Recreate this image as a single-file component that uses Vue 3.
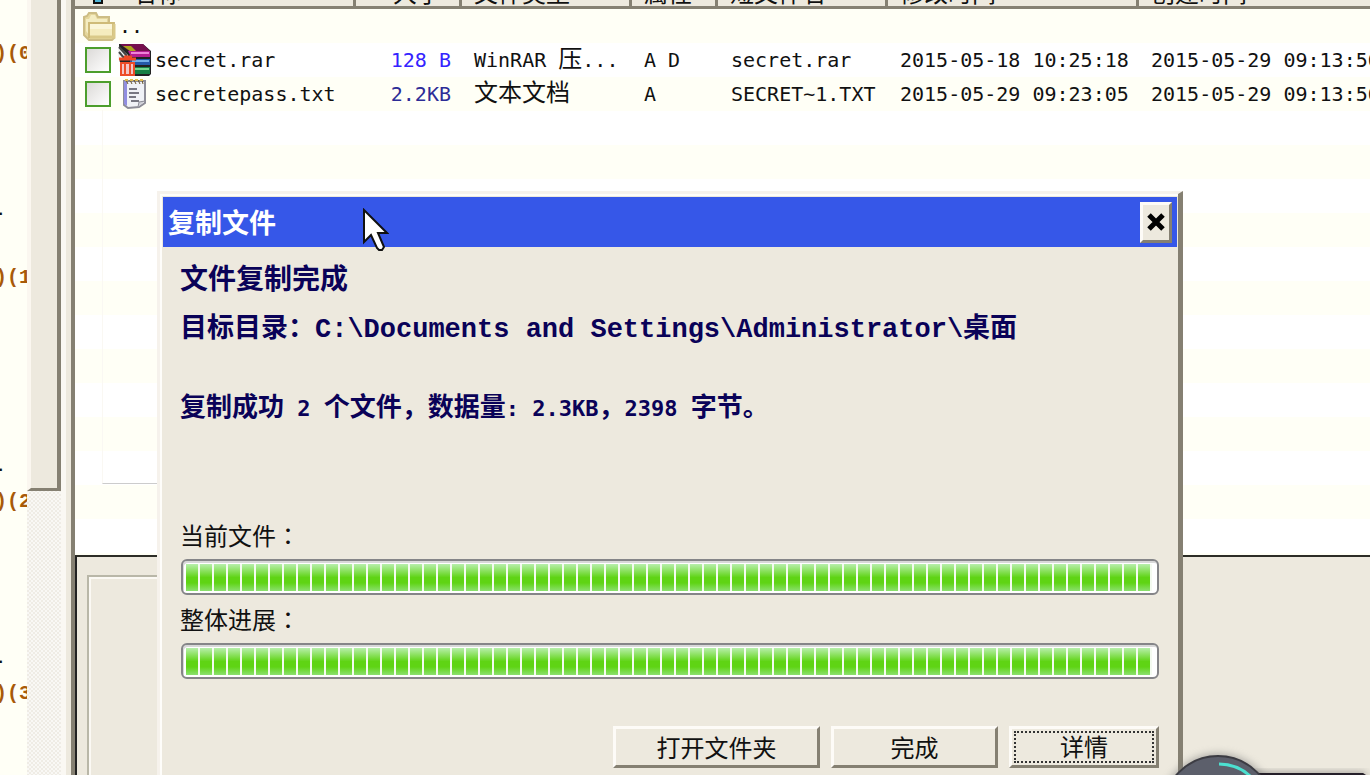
<script setup>
import { ref } from 'vue'

const treeLines = ref([
  '', ')(0', '', '', '', '', '-', '', ')(1', '', '', '', '', '', '-', ')(2',
  '', '', '', '', '-', ')(3',
])

const columns = [
  { key: 'name', label: '名称' },
  { key: 'size', label: '大小' },
  { key: 'type', label: '文件类型' },
  { key: 'attr', label: '属性' },
  { key: 'short', label: '短文件名' },
  { key: 'modified', label: '修改时间' },
  { key: 'created', label: '创建时间' },
]

const files = ref([
  { name: 'secret.rar', icon: 'rar', checked: false, size: '128 B', type: 'WinRAR 压...', attr: 'A D', short: 'secret.rar', modified: '2015-05-18 10:25:18', created: '2015-05-29 09:13:56' },
  { name: 'secretepass.txt', icon: 'txt', checked: false, size: '2.2KB', type: '文本文档', attr: 'A', short: 'SECRET~1.TXT', modified: '2015-05-29 09:23:05', created: '2015-05-29 09:13:56' },
])

const progress = ref([
  { label: '当前文件', value: 100 },
  { label: '整体进展', value: 100 },
])

const dialogOpen = ref(true)

const closeDialog = () => {
  dialogOpen.value = false
}

// chinese parts are set larger than the latin ones
const splitText = (text) => text.match(/[\u4e00-\u9fff]+|[^\u4e00-\u9fff]+/g)
const isChinese = (text) => /[\u4e00-\u9fff]/.test(text)
</script>

<template>
  <div class="window">
    <aside class="tree">
      <p v-for="(line, i) in treeLines" :key="i" :class="{ dash: line === '-' }">{{ line }}</p>
    </aside>
    <div class="scrollbar">
      <div class="thumb"></div>
    </div>
    <div class="splitter"></div>

    <main class="right">
      <div class="list">
        <table>
          <thead>
            <tr>
              <th v-for="col in columns" :key="col.key" :class="col.key">
                <div class="head">
                  <svg v-if="col.key === 'name'" width="10" height="24" viewBox="0 0 10 24">
                    <path d="M1 1h8v20H1z" fill="#4fb5d8" stroke="#111" stroke-width="2" />
                  </svg>
                  <span>{{ col.label }}</span>
                </div>
              </th>
            </tr>
          </thead>
          <tbody>
            <tr>
              <td colspan="7">
                <div class="name-cell up">
                  <svg width="34" height="30" viewBox="0 0 34 30">
                    <path d="M1 24V6l3-1 2-3h7l2 4h11v6h5v15l-2 2H6z" fill="#e5d79c" stroke="#cdbd85" stroke-width="2" />
                    <path d="M3 20V8h3l2-4h4l2 4h10v4H6v12z" fill="#f4edc2" />
                    <path d="M6 12h24v14H6z" fill="#f5ecbf" stroke="#cfbb78" stroke-width="2" />
                    <path d="M7 13h22v5H7z" fill="#fbf6d9" />
                    <path d="M7 26h24V13" fill="none" stroke="#dac989" stroke-width="3" />
                  </svg>
                  <span>..</span>
                </div>
              </td>
            </tr>
            <tr v-for="file in files" :key="file.name">
              <td class="name">
                <div class="name-cell">
                  <input type="checkbox" v-model="file.checked" :aria-label="file.name">
                  <svg v-if="file.icon === 'rar'" width="34" height="34" viewBox="0 0 34 34">
                    <path d="M1 1h24l8 7v23l-2 2H9L2 25z" fill="#222" />
                    <path d="M2 1h23l7 7H11z" fill="#76104e" />
                    <path d="M5 3h8l5 5h-6z" fill="#aca51c" />
                    <path d="M10 8h22v6H13z" fill="#b51c91" />
                    <path d="M13 10h18" stroke="#ef83d7" stroke-width="2" />
                    <path d="M12 16h20v6H12z" fill="#245aa8" />
                    <path d="M14 18h17" stroke="#72afe8" stroke-width="2" />
                    <path d="M15 24h17v7H15z" fill="#188044" />
                    <path d="M17 26h14" stroke="#74d68e" stroke-width="2" />
                    <path d="M0 3l10 9v5H0z" fill="#f3f3f3" />
                    <path d="M1 4l8 9M1 9l5 6" stroke="#444" stroke-width="2" />
                    <path d="M0 19h3v6H0zM0 27h3v7H0z" fill="#fff" />
                    <path d="M1 16h17M6 14h8" stroke="#ee4926" stroke-width="3" />
                    <path d="M3 20h13v12H3z" fill="#f3c5c5" stroke="#ed4c28" stroke-width="2" />
                    <path d="M7 20v11M12 20v11" stroke="#ed4c28" stroke-width="2" />
                  </svg>
                  <svg v-else width="34" height="34" viewBox="0 0 34 34">
                    <path d="M6 4h21v22l-6 4-11 1-4-3z" fill="#f0f2f6" stroke="#8d8d97" stroke-width="2" />
                    <path d="M6 4v23l3 2V5z" fill="#918ee0" />
                    <path d="M20 30l1-5 6-1" fill="#d0d1d8" stroke="#8d8d97" />
                    <path d="M11 12h8M11 16h10M11 20h7M13 24h8" stroke="#777782" stroke-width="2" />
                    <path d="M8 3l2 4M12 3l2 4M16 3l2 4M20 3l2 4M24 3l1 4" stroke="#65522b" stroke-width="1" />
                    <path d="M7 3h19" stroke="#e0bd52" stroke-width="2" stroke-dasharray="3 2" />
                  </svg>
                  <span>{{ file.name }}</span>
                </div>
              </td>
              <td class="size" :class="file.icon">{{ file.size }}</td>
              <td class="type">
                <span v-for="part in splitText(file.type)" :key="part" :class="{ chinese: isChinese(part) }">{{ part }}</span>
              </td>
              <td>{{ file.attr }}</td>
              <td class="short">{{ file.short }}</td>
              <td>{{ file.modified }}</td>
              <td>{{ file.created }}</td>
            </tr>
          </tbody>
        </table>
        <div class="drag-outline"></div>
      </div>
      <div class="details">
        <div class="group"></div>
      </div>
    </main>

    <section v-if="dialogOpen" class="dialog" role="dialog" aria-labelledby="dialog-title">
      <header class="titlebar">
        <h1 id="dialog-title">复制文件</h1>
        <button class="close" aria-label="关闭" @click="closeDialog">
          <svg width="18" height="18" viewBox="0 0 18 18">
            <path d="M2 2l14 14M16 2L2 16" stroke="#000" stroke-width="5" />
          </svg>
        </button>
      </header>
      <div class="content">
        <h2>文件复制完成</h2>
        <p class="target">目标目录：C:\Documents and Settings\Administrator\桌面</p>
        <p class="result">复制成功<span>&nbsp;2&nbsp;</span>个文件，数据量<span>:&nbsp;2.3KB</span>，<span>2398&nbsp;</span>字节。</p>
        <div v-for="(item, i) in progress" :key="item.label" class="progress">
          <div class="label" :id="'progress-' + i">{{ item.label }}<span>：</span></div>
          <div class="bar" role="progressbar" :aria-labelledby="'progress-' + i" :aria-valuenow="item.value">
            <div class="fill" :style="{ width: item.value + '%' }"></div>
          </div>
        </div>
        <div class="buttons">
          <button class="open">打开文件夹</button>
          <button class="done" @click="closeDialog">完成</button>
          <button class="more"><span>详情</span></button>
        </div>
      </div>
    </section>

    <svg class="cursor" width="26" height="44" viewBox="0 0 26 44">
      <path d="M1 2v32l7-7 6 13 2 2h3l2-3-6-14h9z" fill="#fff" stroke="#111" stroke-width="2" />
    </svg>

    <svg class="bubble" width="210" height="40" viewBox="0 0 210 40">
      <defs>
        <filter id="soft" x="-20%" y="-60%" width="140%" height="220%">
          <feGaussianBlur stdDeviation="4" />
        </filter>
      </defs>
      <circle cx="58" cy="76" r="57" fill="#777" opacity="0.6" filter="url(#soft)" />
      <path d="M58 38h148v8H58z" fill="#555" opacity="0.6" filter="url(#soft)" />
      <path d="M90 38h113l3 2H90z" fill="#251f29" />
      <circle cx="58" cy="76" r="55" fill="#5c5f6b" stroke="#3c3c43" stroke-width="2" />
      <path d="M59 29a47 47 0 0 1 35 16" fill="none" stroke="#4ce0d0" stroke-width="3" />
    </svg>
  </div>
</template>

<style>
body {
  background: #ede9de;
}
</style>

<style scoped>
.window {
  position: relative;
  display: flex;
  height: 100vh;
  overflow: hidden;
  background: #ede9de;
  color: #111;
  font-family: "DejaVu Sans Mono", "Noto Sans CJK SC", monospace;
  font-size: 20px;
}
p, h1, h2 {
  margin: 0;
}
button {
  padding: 0;
  border: 3px solid;
  border-color: #fdfbf7 #858072 #858072 #fdfbf7;
  background: #ede9de;
  color: #111;
  font-family: "Noto Sans CJK SC", sans-serif;
  font-size: 24px;
  line-height: 32px;
}

/* left tree pane */
.tree {
  flex: none;
  box-sizing: border-box;
  width: 27px;
  padding-top: 6px;
  overflow: hidden;
  background: #fffff6;
}
.tree p {
  height: 32px;
  margin-left: -5px;
  color: #a85a08;
  font-family: "Liberation Mono", monospace;
  font-size: 20px;
  font-weight: bold;
  line-height: 32px;
  white-space: pre;
}
.tree .dash {
  margin-left: -7px;
  color: #111;
}
.scrollbar {
  flex: none;
  width: 34px;
  background: repeating-conic-gradient(#efece5 0 25%, #f9f8f5 0 50%) 0 0 / 4px 4px;
}
.thumb {
  box-sizing: border-box;
  height: 491px;
  border: solid;
  border-width: 0 4px 3px 4px;
  border-color: #858072 #858072 #858072 #fbf7f0;
  background: #ede9de;
}
.splitter {
  flex: none;
  box-sizing: border-box;
  width: 14px;
  border-left: 5px solid #faf8f3;
  border-right: 4px solid #858072;
}

/* file list */
.right {
  flex: 1;
  min-width: 0;
  display: flex;
  flex-direction: column;
}
.list {
  position: relative;
  flex: 1;
  overflow: hidden;
  background: repeating-linear-gradient(#fffff6 0 34px, #fff 34px 68px) 0 9px;
}
table {
  width: 100%;
  table-layout: fixed;
  border-collapse: separate;
  border-spacing: 0;
}
th {
  box-sizing: border-box;
  padding: 0;
  border-right: 3px solid #858072;
  border-bottom: 3px solid #858072;
  background: #ede9de;
  font-weight: normal;
}
th:last-child {
  border-right: 0;
}
th.name { width: 281px; }
th.size { width: 106px; }
th.type { width: 170px; }
th.attr { width: 86px; }
th.short { width: 170px; }
th.modified { width: 251px; }
.head {
  display: flex;
  align-items: flex-end;
  height: 6px;
  padding-left: 12px;
  overflow: hidden;
  font-size: 24px;
  line-height: 24px;
}
th.name .head {
  gap: 30px;
  padding-left: 18px;
}
th.size .head {
  justify-content: flex-end;
  padding-right: 18px;
}
td {
  box-sizing: border-box;
  height: 34px;
  padding: 0 0 0 12px;
  overflow: hidden;
  line-height: 34px;
  white-space: nowrap;
}
td:first-child {
  padding-left: 10px;
}
td.size {
  padding-right: 11px;
  text-align: right;
}
td.short {
  padding-left: 13px;
}
.type .chinese {
  font-size: 24px;
  line-height: 24px;
}
.size.rar { color: #3424ff; }
.size.txt { color: #2c2c96; }
.name-cell {
  display: flex;
  align-items: center;
  height: 34px;
}
.name-cell svg {
  margin: 0 3px 0 7px;
}
.name-cell.up svg {
  margin: 0 2px 0 -2px;
}
input {
  flex: none;
  box-sizing: border-box;
  appearance: none;
  width: 26px;
  height: 26px;
  margin: 0;
  border: 2px solid #4c9e2c;
  background: linear-gradient(135deg, #dcdad8, #fff);
}
.drag-outline {
  position: absolute;
  top: 110px;
  left: 27px;
  width: 60px;
  height: 373px;
  border-left: 1px solid #faf8f3;
  border-bottom: 1px solid #ccc;
}

.details {
  box-sizing: border-box;
  height: 220px;
  padding: 18px 0 0 10px;
  border-top: 2px solid #2c2c26;
  border-left: 2px solid #222;
}
.group {
  width: 60%;
  height: 240px;
  border: 2px solid #b9b7a8;
  box-shadow: inset 2px 2px #fbf9f4;
}

/* copy dialog */
.dialog {
  position: absolute;
  top: 191px;
  right: 187px;
  bottom: 0;
  left: 157px;
  border: solid;
  border-width: 3px 5px 0 3px;
  border-color: #f6f2ec #858072 #858072 #f6f2ec;
  background: #ede9de;
  box-shadow: inset 2px 2px #fefdfa;
}
.titlebar {
  display: flex;
  align-items: center;
  justify-content: space-between;
  height: 50px;
  margin: 3px 1px 0 3px;
  padding: 0 5px;
  background: #3657e8;
}
h1 {
  color: #fff;
  font-family: "Noto Sans CJK SC", sans-serif;
  font-size: 27px;
  line-height: 48px;
}
.close {
  display: flex;
  align-items: center;
  justify-content: center;
  width: 32px;
  height: 41px;
}
.content {
  padding: 11px 19px 0 20px;
}
h2, .target, .result {
  color: #0a0258;
  font-family: "Liberation Mono", "Noto Sans CJK SC", monospace;
  font-weight: bold;
  line-height: 48px;
  white-space: nowrap;
}
h2 {
  font-size: 28px;
}
.target {
  font-size: 27px;
}
.result {
  margin-top: 31px;
  font-size: 26px;
}
.result span {
  font-family: "DejaVu Sans Mono", monospace;
  font-size: 22px;
}
.progress {
  height: 84px;
}
.result + .progress {
  margin-top: 80px;
}
.label {
  height: 46px;
  font-family: "Noto Sans CJK SC", sans-serif;
  font-size: 24px;
  line-height: 44px;
}
.label span {
  font-family: "Noto Sans CJK TC", sans-serif;
}
.bar {
  box-sizing: border-box;
  height: 36px;
  margin-left: 1px;
  padding: 3px 5px 2px 3px;
  border: 2px solid #858588;
  border-radius: 6px;
  background: #fff;
  box-shadow: inset 1px 2px #d8d8d8;
}
.fill {
  height: 27px;
  background:
    repeating-linear-gradient(90deg, transparent 0 12px, #f4fbf0 12px 14px),
    linear-gradient(#b8efac, #5fd414 50%, #5fd414 70%, #8be070);
}
.buttons {
  display: flex;
  justify-content: flex-end;
  gap: 11px;
  margin-top: 45px;
}
.buttons button {
  box-sizing: border-box;
  height: 42px;
}
.open { width: 207px; }
.done { width: 167px; }
.more {
  width: 150px;
  padding: 2px;
}
.more span {
  display: block;
  height: 28px;
  border: 2px dotted #333;
  line-height: 26px;
}

.cursor {
  position: absolute;
  top: 208px;
  left: 363px;
}
.bubble {
  position: absolute;
  right: 0;
  bottom: 0;
}
</style>
